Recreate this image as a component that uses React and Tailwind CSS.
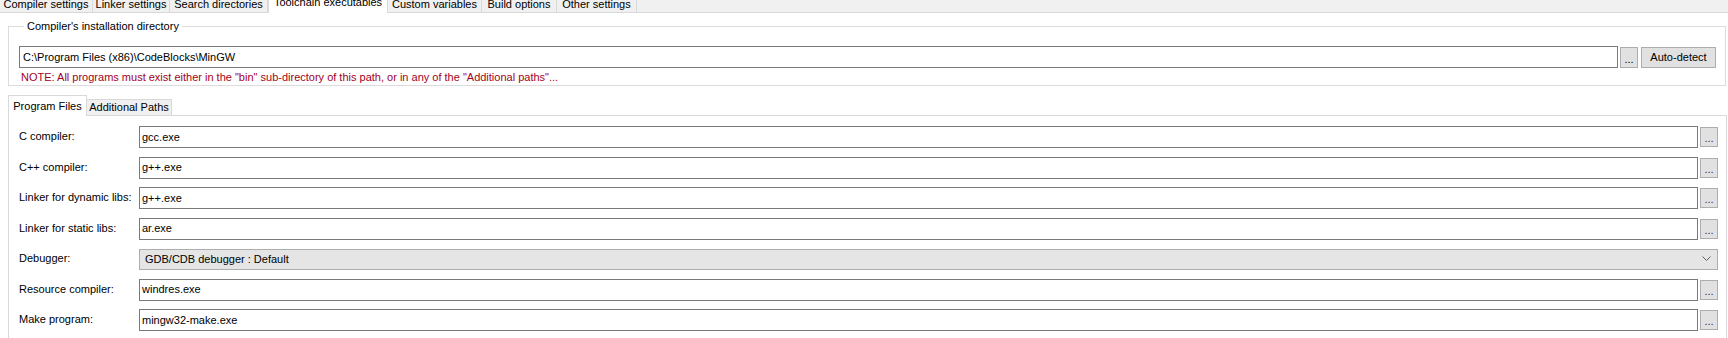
import React from "react";

const topTabs = [
  { label: "Compiler settings", w: 93 },
  { label: "Linker settings", w: 77 },
  { label: "Search directories", w: 98 },
  { label: "Toolchain executables", w: 120, active: true },
  { label: "Custom variables", w: 94 },
  { label: "Build options", w: 75 },
  { label: "Other settings", w: 80 },
];

const programs = [
  { label: "C compiler:", value: "gcc.exe" },
  { label: "C++ compiler:", value: "g++.exe" },
  { label: "Linker for dynamic libs:", value: "g++.exe" },
  { label: "Linker for static libs:", value: "ar.exe" },
  { label: "Debugger:", value: "GDB/CDB debugger : Default", combo: true },
  { label: "Resource compiler:", value: "windres.exe" },
  { label: "Make program:", value: "mingw32-make.exe" },
];

function DotsButton() {
  return (
    <div className="ml-[2px] w-[18px] h-[20px] shrink-0 bg-[#e1e1e1] border border-[#adadad] flex items-end justify-center text-[#2a2a6e] leading-[14px] pb-[1px]">
      ...
    </div>
  );
}

function Row({ it }) {
  return (
    <div className="flex items-center h-[22px]">
      <div className="w-[120px] shrink-0 -mt-[1px] whitespace-nowrap">{it.label}</div>
      {it.combo ? (
        <div className="flex-1 h-[21px] bg-[#e5e5e5] border border-[#adadad] flex items-center pl-[5px] pr-[5px]">
          <span className="flex-1">{it.value}</span>
          <svg width="9" height="6" viewBox="0 0 9 6" className="mr-[1px]">
            <polyline points="0.5,0.5 4.5,4.5 8.5,0.5" fill="none" stroke="#606060" strokeWidth="1" />
          </svg>
        </div>
      ) : (
        <>
          <div className="flex-1 h-[22px] border border-[#7a7a7a] flex items-center pl-[2px]">{it.value}</div>
          <DotsButton />
        </>
      )}
    </div>
  );
}

export default function App() {
  return (
    <div className="w-[1728px] h-[338px] overflow-hidden bg-white text-black text-[11px] font-['Liberation_Sans',Arial,sans-serif]">
      {/* top notebook tabs (scrolled, text cut at top) */}
      <div className="flex h-[13px] bg-[#f0f0f0] border-b border-[#d9d9d9]">
        {topTabs.map((t) => (
          <div
            key={t.label}
            style={{ width: t.w }}
            className={
              t.active
                ? "h-[13px] shrink-0 bg-white border-x border-[#d9d9d9] flex justify-center overflow-hidden"
                : "h-[12px] shrink-0 border-r border-[#d9d9d9] flex justify-center overflow-hidden"
            }
          >
            <span className={t.active ? "block leading-[11px] -mt-[3px]" : "block leading-[11px] -mt-[1px]"}>
              {t.label}
            </span>
          </div>
        ))}
      </div>

      {/* installation directory group */}
      <fieldset className="mt-[7px] ml-[8px] mr-[2px] border border-[#dcdcdc] pl-[10px] pr-[9px] pb-[1px]">
        <legend className="ml-[5px] px-[3px] leading-[13px]">Compiler's installation directory</legend>
        <div className="flex items-center pt-[13px]">
          <div className="flex-1 h-[22px] border border-[#7a7a7a] flex items-center pl-[3px]">
            C:\Program Files (x86)\CodeBlocks\MinGW
          </div>
          <div className="ml-[2px] w-[18px] h-[21px] bg-[#e1e1e1] border border-[#adadad] flex items-end justify-center leading-[14px] pb-[1px]">
            ...
          </div>
          <div className="ml-[3px] w-[75px] h-[21px] bg-[#e1e1e1] border border-[#adadad] flex items-center justify-center">
            Auto-detect
          </div>
        </div>
        <div className="mt-[3px] ml-[2px] leading-[13px] text-[#a4001c]">
          NOTE: All programs must exist either in the "bin" sub-directory of this path, or in any of the "Additional paths"...
        </div>
      </fieldset>

      {/* inner tabs */}
      <div className="mt-[9px] ml-[8px] flex items-end">
        <div className="relative z-10 -mb-px h-[21px] w-[79px] bg-white border-x border-t border-[#d9d9d9] flex items-center justify-center">
          Program Files
        </div>
        <div className="h-[16px] w-[85px] bg-[#f0f0f0] border-t border-r border-[#d9d9d9] flex items-center justify-center">
          Additional Paths
        </div>
      </div>
      <div className="ml-[8px] mr-[1px] border-t border-x border-[#d9d9d9] h-[240px] pt-[10px] pl-[10px] pr-[8px] flex flex-col gap-[8.5px]">
        {programs.map((it) => (
          <Row key={it.label} it={it} />
        ))}
      </div>
    </div>
  );
}
